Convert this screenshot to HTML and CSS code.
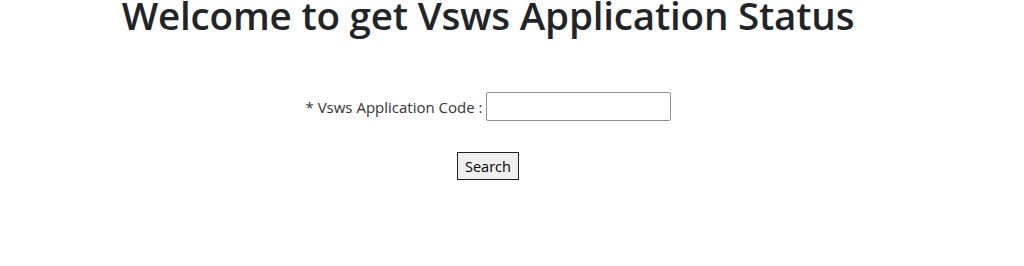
FILE: index.html
```html
<!DOCTYPE html>
<html>
<head>
<meta charset="utf-8">
<link rel="stylesheet" href="styles.css">
</head>
<body>
<div class="page">
  <h1 class="title">Welcome to get Vsws Application Status</h1>
  <div class="row">
    <label class="label" for="code">* Vsws Application Code :</label>
    <input class="input" id="code" type="text">
  </div>
  <div class="row actions">
    <button class="btn" type="button">Search</button>
  </div>
</div>
</body>
</html>
```
FILE: styles.css
```css
html, body {
  margin: 0;
  padding: 0;
  background: #fff;
}
.page {
  width: 976px;
  display: flex;
  flex-direction: column;
  align-items: center;
  font-family: "Open Sans", "Noto Sans", sans-serif;
  color: #262626;
}
.title {
  margin: 0;
  font-size: 38.6px;
  font-weight: 600;
  line-height: 30px;
  height: 30px;
  color: #212529;
  letter-spacing: -0.2px;
  white-space: nowrap;
}
.row {
  display: flex;
  align-items: center;
  gap: 3px;
  margin-top: 62px;
}
.label {
  font-size: 15px;
  color: #333;
}
.input {
  width: 185px;
  height: 29px;
  box-sizing: border-box;
  border: 1px solid #8f8f8f;
  border-radius: 2px;
  padding: 0 4px;
  margin: 0;
}
.actions {
  margin-top: 31px;
}
.btn {
  width: 62px;
  height: 28px;
  box-sizing: border-box;
  font-family: "Open Sans", "Noto Sans", sans-serif;
  font-size: 14.5px;
  color: #000;
  background: #efefef;
  border: 1px solid #1f1f1f;
  border-radius: 0;
  padding: 0;
}
```
